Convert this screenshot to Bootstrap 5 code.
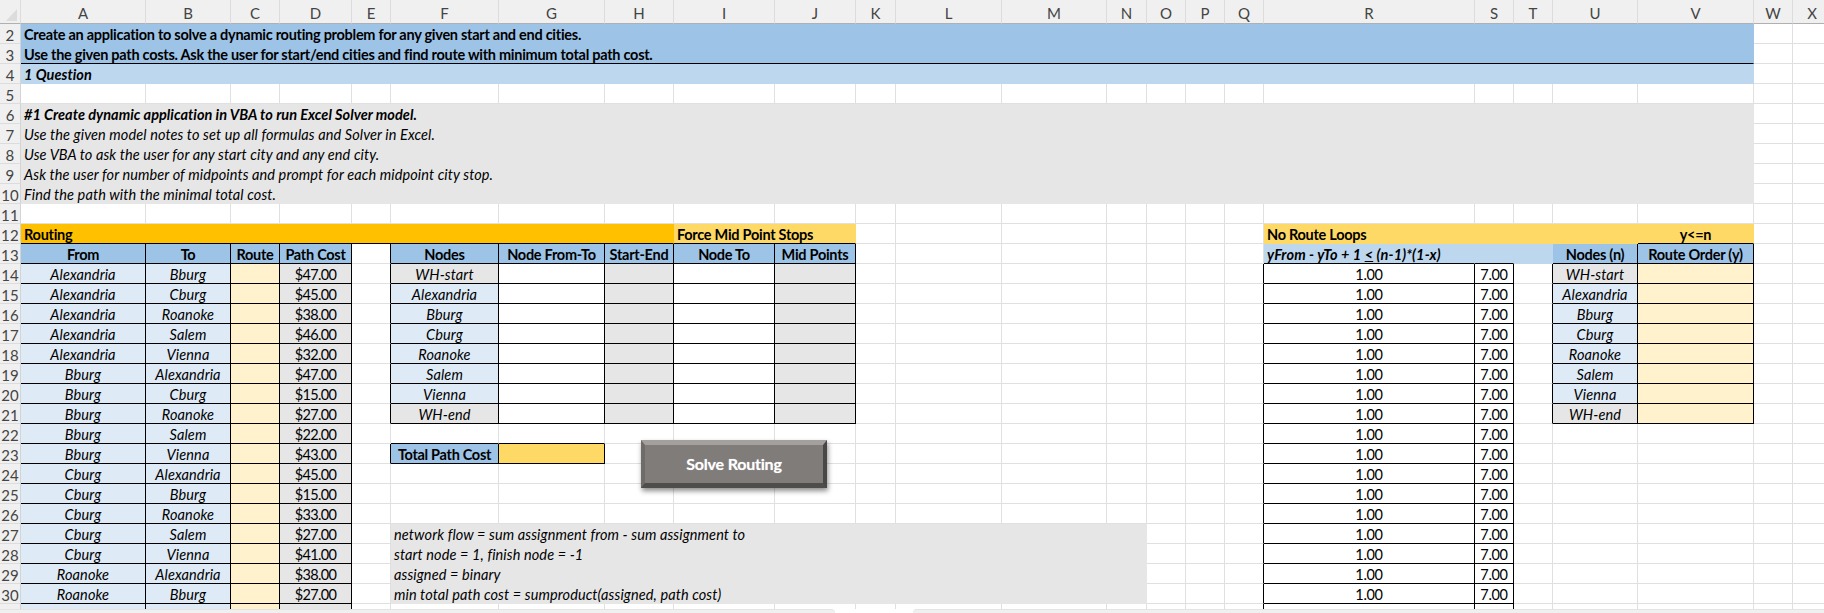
<!DOCTYPE html>
<html lang="en">
<head>
<meta charset="utf-8">
<title>Routing</title>
<link href="https://cdn.jsdelivr.net/npm/bootstrap@5.3.0/dist/css/bootstrap.min.css" rel="stylesheet">
<style>
body{background:#fff;font-family:Lato,"Liberation Sans",sans-serif;}
.xl{width:1832px;table-layout:fixed;border-collapse:separate;border-spacing:0;font-size:14.5px;letter-spacing:-.27px;line-height:16px;color:#000;--bs-table-bg:transparent;--bs-table-color:#000;}
.xl td{height:20px;padding:3px 3px 0;border-style:solid;border-width:0 1px 1px 0;border-color:#e0e0e0;white-space:nowrap;vertical-align:top;overflow:visible;}
.xl th{height:24px;padding:3px 0 0;font-weight:400;text-align:center;color:#444;background:#f0f0f0;border-style:solid;border-width:0 1px 1px 0;border-color:#e0e0e0 #dcdcdc #b0b0b0 #e0e0e0;font-size:15px;letter-spacing:0;vertical-align:middle;}
.xl th.cnr{padding:0;}
.cnr svg{display:block;}
.xl td.rh{padding:3px 0 0;background:#f0f0f0;color:#444;font-style:normal;font-weight:400;text-align:center;border-color:#dcdcdc #d4d4d4 #dcdcdc #dcdcdc;font-size:15px;letter-spacing:.2px;}
.xl .fl{border-color:transparent;}
.xl td.bk{border-color:#000;}
.xl td.kr{border-right-color:#000;}
.xl td.kb{border-bottom-color:#000;}
.xl .lb{background:#deeaf6;}
.xl .ly{background:#fff2cc;}
.xl .gr{background:#e6e6e6;}
.xl .hb{background:#9dc3e6;}
.xl .hl{background:#bdd7ee;}
.xl .am{background:#ffc000;}
.xl .yl{background:#ffd966;}
.xl tr.fst-italic td{letter-spacing:.1px;}
.xl tr.fw-bold.fst-italic td{letter-spacing:.03px;}
.xl td.fst-italic{letter-spacing:.14px;}
.xl tr td.nr{font-style:normal;letter-spacing:-.3px;}
.xl tr td.gr.nr{letter-spacing:-.65px;}
.solve{position:absolute;left:641px;top:440px;width:186px;height:48px;padding:0;border-radius:0;color:#fff;background:#7f7c7a;font-weight:700;font-size:16px;letter-spacing:-.2px;border-style:solid;border-width:5px 4px 5px 4px;border-color:#a3a09e #4a4847 #4f4d4c #6e6b69;box-shadow:1px 3px 5px rgba(0,0,0,.45);text-shadow:0 0 1px rgba(255,255,255,.5);}
.solve:hover{color:#fff;background:#7f7c7a;border-color:#a3a09e #4a4847 #4f4d4c #6e6b69;}
.tabl{width:835px;}
.tabg{width:78px;}
.tabl,.tabr{background:#f0f0f0;border-top:1px solid #e4e4e4;}
.tabl{border-top-right-radius:6px;}
.tabr{border-top-left-radius:6px;}
.foot{height:4px;}
</style>
</head>
<body class="overflow-hidden">
<div class="d-flex flex-column vh-100 overflow-hidden">
<div class="flex-grow-1 overflow-hidden position-relative">
<table class="table xl mb-0">
<colgroup><col style="width:21px"><col style="width:125px"><col style="width:85px"><col style="width:49px"><col style="width:72px"><col style="width:39px"><col style="width:108px"><col style="width:106px"><col style="width:69px"><col style="width:101px"><col style="width:81px"><col style="width:40px"><col style="width:106px"><col style="width:105px"><col style="width:40px"><col style="width:39px"><col style="width:39px"><col style="width:39px"><col style="width:211px"><col style="width:39px"><col style="width:39px"><col style="width:85px"><col style="width:116px"><col style="width:39px"><col style="width:39px"></colgroup>
<thead><tr><th class="cnr"><svg width="20" height="23" viewBox="0 0 20 23"><polygon points="6,21 17,21 17,9" fill="#dcdcdc"/></svg></th><th>A</th><th>B</th><th>C</th><th>D</th><th>E</th><th>F</th><th>G</th><th>H</th><th>I</th><th>J</th><th>K</th><th>L</th><th>M</th><th>N</th><th>O</th><th>P</th><th>Q</th><th>R</th><th>S</th><th>T</th><th>U</th><th>V</th><th>W</th><th>X</th></tr></thead>
<tbody>
<tr class="fw-bold"><td class="rh">2</td><td colspan="22" class="hb fl">Create an application to solve a dynamic routing problem for any given start and end cities.</td><td></td><td></td></tr>
<tr class="fw-bold"><td class="rh">3</td><td colspan="22" class="hb fl kb">Use the given path costs. Ask the user for start/end cities and find route with minimum total path cost.</td><td></td><td></td></tr>
<tr class="fw-bold fst-italic"><td class="rh">4</td><td colspan="22" class="hl fl">1 Question</td><td></td><td></td></tr>
<tr><td class="rh">5</td><td></td><td></td><td></td><td></td><td></td><td></td><td></td><td></td><td></td><td></td><td></td><td></td><td></td><td></td><td></td><td></td><td></td><td></td><td></td><td></td><td></td><td></td><td></td><td></td></tr>
<tr class="fw-bold fst-italic"><td class="rh">6</td><td colspan="22" class="gr fl">#1 Create dynamic application in VBA to run Excel Solver model.</td><td></td><td></td></tr>
<tr class="fst-italic"><td class="rh">7</td><td colspan="22" class="gr fl">Use the given model notes to set up all formulas and Solver in Excel.</td><td></td><td></td></tr>
<tr class="fst-italic"><td class="rh">8</td><td colspan="22" class="gr fl">Use VBA to ask the user for any start city and any end city.</td><td></td><td></td></tr>
<tr class="fst-italic"><td class="rh">9</td><td colspan="22" class="gr fl">Ask the user for number of midpoints and prompt for each midpoint city stop.</td><td></td><td></td></tr>
<tr class="fst-italic"><td class="rh">10</td><td colspan="22" class="gr fl">Find the path with the minimal total cost.</td><td></td><td></td></tr>
<tr><td class="rh">11</td><td></td><td></td><td></td><td></td><td></td><td></td><td></td><td></td><td></td><td></td><td></td><td></td><td></td><td></td><td></td><td></td><td></td><td></td><td></td><td></td><td></td><td></td><td></td><td></td></tr>
<tr class="fw-bold"><td class="rh">12</td><td colspan="8" class="am fl kb">Routing</td><td colspan="2" class="yl fl kb">Force Mid Point Stops</td><td></td><td></td><td></td><td></td><td></td><td></td><td></td><td colspan="4" class="yl fl">No Route Loops</td><td class="yl fl kb text-center">y&lt;=n</td><td></td><td></td></tr>
<tr class="fw-bold text-center"><td class="rh">13</td><td class="hb bk">From</td><td class="hb bk">To</td><td class="hb bk">Route</td><td class="hb bk">Path Cost</td><td class="kr"></td><td class="hb bk">Nodes</td><td class="hb bk">Node From-To</td><td class="hb bk">Start-End</td><td class="hb bk">Node To</td><td class="hb bk">Mid Points</td><td></td><td></td><td></td><td></td><td></td><td></td><td></td><td class="hl fl kb text-start fst-italic">yFrom - yTo + 1 <u>&lt;</u> (n-1)*(1-x)</td><td class="hl fl kb"></td><td class="hl fl"></td><td class="hb bk">Nodes (n)</td><td class="hb bk">Route Order (y)</td><td></td><td></td></tr>
<tr class="text-center fst-italic"><td class="rh">14</td><td class="lb bk">Alexandria</td><td class="lb bk">Bburg</td><td class="ly bk"></td><td class="gr bk nr">$47.00</td><td class="kr"></td><td class="gr bk">WH-start</td><td class="bk"></td><td class="gr bk"></td><td class="bk"></td><td class="gr bk"></td><td></td><td></td><td></td><td></td><td></td><td></td><td class="kr"></td><td class="bk nr">1.00</td><td class="bk nr">7.00</td><td class="kr"></td><td class="gr bk">WH-start</td><td class="ly bk"></td><td></td><td></td></tr>
<tr class="text-center fst-italic"><td class="rh">15</td><td class="lb bk">Alexandria</td><td class="lb bk">Cburg</td><td class="ly bk"></td><td class="gr bk nr">$45.00</td><td class="kr"></td><td class="lb bk">Alexandria</td><td class="bk"></td><td class="gr bk"></td><td class="bk"></td><td class="gr bk"></td><td></td><td></td><td></td><td></td><td></td><td></td><td class="kr"></td><td class="bk nr">1.00</td><td class="bk nr">7.00</td><td class="kr"></td><td class="lb bk">Alexandria</td><td class="ly bk"></td><td></td><td></td></tr>
<tr class="text-center fst-italic"><td class="rh">16</td><td class="lb bk">Alexandria</td><td class="lb bk">Roanoke</td><td class="ly bk"></td><td class="gr bk nr">$38.00</td><td class="kr"></td><td class="lb bk">Bburg</td><td class="bk"></td><td class="gr bk"></td><td class="bk"></td><td class="gr bk"></td><td></td><td></td><td></td><td></td><td></td><td></td><td class="kr"></td><td class="bk nr">1.00</td><td class="bk nr">7.00</td><td class="kr"></td><td class="lb bk">Bburg</td><td class="ly bk"></td><td></td><td></td></tr>
<tr class="text-center fst-italic"><td class="rh">17</td><td class="lb bk">Alexandria</td><td class="lb bk">Salem</td><td class="ly bk"></td><td class="gr bk nr">$46.00</td><td class="kr"></td><td class="lb bk">Cburg</td><td class="bk"></td><td class="gr bk"></td><td class="bk"></td><td class="gr bk"></td><td></td><td></td><td></td><td></td><td></td><td></td><td class="kr"></td><td class="bk nr">1.00</td><td class="bk nr">7.00</td><td class="kr"></td><td class="lb bk">Cburg</td><td class="ly bk"></td><td></td><td></td></tr>
<tr class="text-center fst-italic"><td class="rh">18</td><td class="lb bk">Alexandria</td><td class="lb bk">Vienna</td><td class="ly bk"></td><td class="gr bk nr">$32.00</td><td class="kr"></td><td class="lb bk">Roanoke</td><td class="bk"></td><td class="gr bk"></td><td class="bk"></td><td class="gr bk"></td><td></td><td></td><td></td><td></td><td></td><td></td><td class="kr"></td><td class="bk nr">1.00</td><td class="bk nr">7.00</td><td class="kr"></td><td class="lb bk">Roanoke</td><td class="ly bk"></td><td></td><td></td></tr>
<tr class="text-center fst-italic"><td class="rh">19</td><td class="lb bk">Bburg</td><td class="lb bk">Alexandria</td><td class="ly bk"></td><td class="gr bk nr">$47.00</td><td class="kr"></td><td class="lb bk">Salem</td><td class="bk"></td><td class="gr bk"></td><td class="bk"></td><td class="gr bk"></td><td></td><td></td><td></td><td></td><td></td><td></td><td class="kr"></td><td class="bk nr">1.00</td><td class="bk nr">7.00</td><td class="kr"></td><td class="lb bk">Salem</td><td class="ly bk"></td><td></td><td></td></tr>
<tr class="text-center fst-italic"><td class="rh">20</td><td class="lb bk">Bburg</td><td class="lb bk">Cburg</td><td class="ly bk"></td><td class="gr bk nr">$15.00</td><td class="kr"></td><td class="lb bk">Vienna</td><td class="bk"></td><td class="gr bk"></td><td class="bk"></td><td class="gr bk"></td><td></td><td></td><td></td><td></td><td></td><td></td><td class="kr"></td><td class="bk nr">1.00</td><td class="bk nr">7.00</td><td class="kr"></td><td class="lb bk">Vienna</td><td class="ly bk"></td><td></td><td></td></tr>
<tr class="text-center fst-italic"><td class="rh">21</td><td class="lb bk">Bburg</td><td class="lb bk">Roanoke</td><td class="ly bk"></td><td class="gr bk nr">$27.00</td><td class="kr"></td><td class="gr bk">WH-end</td><td class="bk"></td><td class="gr bk"></td><td class="bk"></td><td class="gr bk"></td><td></td><td></td><td></td><td></td><td></td><td></td><td class="kr"></td><td class="bk nr">1.00</td><td class="bk nr">7.00</td><td class="kr"></td><td class="gr bk">WH-end</td><td class="ly bk"></td><td></td><td></td></tr>
<tr class="text-center fst-italic"><td class="rh">22</td><td class="lb bk">Bburg</td><td class="lb bk">Salem</td><td class="ly bk"></td><td class="gr bk nr">$22.00</td><td></td><td class="kb"></td><td class="kb"></td><td></td><td></td><td></td><td></td><td></td><td></td><td></td><td></td><td></td><td class="kr"></td><td class="bk nr">1.00</td><td class="bk nr">7.00</td><td></td><td></td><td></td><td></td><td></td></tr>
<tr class="text-center fst-italic"><td class="rh">23</td><td class="lb bk">Bburg</td><td class="lb bk">Vienna</td><td class="ly bk"></td><td class="gr bk nr">$43.00</td><td class="kr"></td><td class="hb bk fw-bold nr">Total Path Cost</td><td class="yl bk"></td><td></td><td></td><td></td><td></td><td></td><td></td><td></td><td></td><td></td><td class="kr"></td><td class="bk nr">1.00</td><td class="bk nr">7.00</td><td></td><td></td><td></td><td></td><td></td></tr>
<tr class="text-center fst-italic"><td class="rh">24</td><td class="lb bk">Cburg</td><td class="lb bk">Alexandria</td><td class="ly bk"></td><td class="gr bk nr">$45.00</td><td></td><td></td><td></td><td></td><td></td><td></td><td></td><td></td><td></td><td></td><td></td><td></td><td class="kr"></td><td class="bk nr">1.00</td><td class="bk nr">7.00</td><td></td><td></td><td></td><td></td><td></td></tr>
<tr class="text-center fst-italic"><td class="rh">25</td><td class="lb bk">Cburg</td><td class="lb bk">Bburg</td><td class="ly bk"></td><td class="gr bk nr">$15.00</td><td></td><td></td><td></td><td></td><td></td><td></td><td></td><td></td><td></td><td></td><td></td><td></td><td class="kr"></td><td class="bk nr">1.00</td><td class="bk nr">7.00</td><td></td><td></td><td></td><td></td><td></td></tr>
<tr class="text-center fst-italic"><td class="rh">26</td><td class="lb bk">Cburg</td><td class="lb bk">Roanoke</td><td class="ly bk"></td><td class="gr bk nr">$33.00</td><td></td><td></td><td></td><td></td><td></td><td></td><td></td><td></td><td></td><td></td><td></td><td></td><td class="kr"></td><td class="bk nr">1.00</td><td class="bk nr">7.00</td><td></td><td></td><td></td><td></td><td></td></tr>
<tr class="text-center fst-italic"><td class="rh">27</td><td class="lb bk">Cburg</td><td class="lb bk">Salem</td><td class="ly bk"></td><td class="gr bk nr">$27.00</td><td></td><td colspan="9" class="gr fl text-start">network flow = sum assignment from - sum assignment to</td><td></td><td></td><td class="kr"></td><td class="bk nr">1.00</td><td class="bk nr">7.00</td><td></td><td></td><td></td><td></td><td></td></tr>
<tr class="text-center fst-italic"><td class="rh">28</td><td class="lb bk">Cburg</td><td class="lb bk">Vienna</td><td class="ly bk"></td><td class="gr bk nr">$41.00</td><td></td><td colspan="9" class="gr fl text-start">start node = 1, finish node = -1</td><td></td><td></td><td class="kr"></td><td class="bk nr">1.00</td><td class="bk nr">7.00</td><td></td><td></td><td></td><td></td><td></td></tr>
<tr class="text-center fst-italic"><td class="rh">29</td><td class="lb bk">Roanoke</td><td class="lb bk">Alexandria</td><td class="ly bk"></td><td class="gr bk nr">$38.00</td><td></td><td colspan="9" class="gr fl text-start">assigned = binary</td><td></td><td></td><td class="kr"></td><td class="bk nr">1.00</td><td class="bk nr">7.00</td><td></td><td></td><td></td><td></td><td></td></tr>
<tr class="text-center fst-italic"><td class="rh">30</td><td class="lb bk">Roanoke</td><td class="lb bk">Bburg</td><td class="ly bk"></td><td class="gr bk nr">$27.00</td><td></td><td colspan="9" class="gr fl text-start">min total path cost = sumproduct(assigned, path cost)</td><td></td><td></td><td class="kr"></td><td class="bk nr">1.00</td><td class="bk nr">7.00</td><td></td><td></td><td></td><td></td><td></td></tr>
<tr><td class="rh"></td><td class="lb bk"></td><td class="lb bk"></td><td class="ly bk"></td><td class="gr bk"></td><td></td><td></td><td></td><td></td><td></td><td></td><td></td><td></td><td></td><td></td><td></td><td></td><td class="kr"></td><td class="bk"></td><td class="bk"></td><td></td><td></td><td></td><td></td><td></td></tr>
</tbody>
</table>
<button type="button" class="btn solve">Solve Routing</button>
</div>
<div class="d-flex foot flex-shrink-0"><div class="tabl"></div><div class="tabg"></div><div class="tabr flex-grow-1"></div></div>
</div>
<script src="https://cdn.jsdelivr.net/npm/bootstrap@5.3.0/dist/js/bootstrap.bundle.min.js"></script>
</body>
</html>
